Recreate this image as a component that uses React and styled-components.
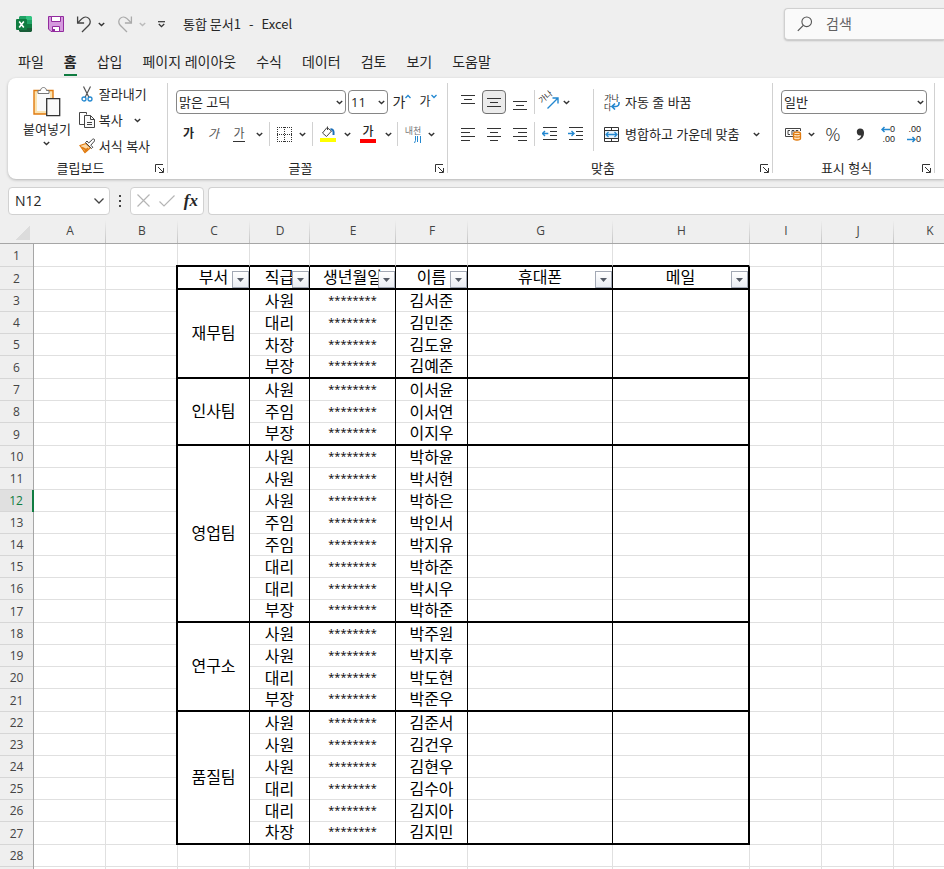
import React from "react";
import styled, { createGlobalStyle, css } from "styled-components";

const COLUMNS = [
  { name: "A", width: 72 },
  { name: "B", width: 72 },
  { name: "C", width: 72 },
  { name: "D", width: 60 },
  { name: "E", width: 86 },
  { name: "F", width: 72 },
  { name: "G", width: 145 },
  { name: "H", width: 137 },
  { name: "I", width: 72 },
  { name: "J", width: 72 },
  { name: "K", width: 72 },
];

const HEADINGS = ["부서", "직급", "생년월일", "이름", "휴대폰", "메일"];

const TEAMS = [
  {
    name: "재무팀",
    people: [
      ["사원", "김서준"],
      ["대리", "김민준"],
      ["차장", "김도윤"],
      ["부장", "김예준"],
    ],
  },
  {
    name: "인사팀",
    people: [
      ["사원", "이서윤"],
      ["주임", "이서연"],
      ["부장", "이지우"],
    ],
  },
  {
    name: "영업팀",
    people: [
      ["사원", "박하윤"],
      ["사원", "박서현"],
      ["사원", "박하은"],
      ["주임", "박인서"],
      ["주임", "박지유"],
      ["대리", "박하준"],
      ["대리", "박시우"],
      ["부장", "박하준"],
    ],
  },
  {
    name: "연구소",
    people: [
      ["사원", "박주원"],
      ["사원", "박지후"],
      ["대리", "박도현"],
      ["부장", "박준우"],
    ],
  },
  {
    name: "품질팀",
    people: [
      ["사원", "김준서"],
      ["사원", "김건우"],
      ["사원", "김현우"],
      ["대리", "김수아"],
      ["대리", "김지아"],
      ["차장", "김지민"],
    ],
  },
];

const TABS = ["파일", "홈", "삽입", "페이지 레이아웃", "수식", "데이터", "검토", "보기", "도움말"];

const ACTIVE_ROW = 12;

// one entry per sheet row, the people start at row 3
const people = [];
TEAMS.forEach((team) => {
  team.people.forEach(([rank, name], i) => {
    people.push({
      row: people.length + 3,
      team: i === 0 ? team : null,
      rank,
      name,
      last: i === team.people.length - 1,
    });
  });
});

const Chevron = ({ color = "#333" }) => (
  <svg width="7" height="5" viewBox="0 0 7 5" fill="none" aria-hidden="true">
    <path d="M.8 1l2.7 2.6L6.2 1" stroke={color} strokeWidth="1.4" />
  </svg>
);

const ExcelLogo = () => (
  <svg width="16" height="16" viewBox="0 0 16 16" aria-hidden="true">
    <path d="M4 0h6v4H3V1z" fill="#21a366" />
    <path d="M10 0h5l1 1v3h-6z" fill="#33c481" />
    <path d="M3 4h7v4H3z" fill="#107c41" />
    <path d="M10 4h6v4h-6z" fill="#21a366" />
    <path d="M3 8h7v4H3z" fill="#185c37" />
    <path d="M10 8h6v4h-6z" fill="#107c41" />
    <path d="M3 12h13v3l-1 1H4l-1-1z" fill="#185c37" />
    <rect y="3" width="11" height="11" rx="1" fill="#107c41" />
    <path d="M3.2 5.5l4.6 6M7.8 5.5l-4.6 6" stroke="#fff" strokeWidth="1.6" />
  </svg>
);

const SaveIcon = () => (
  <svg width="16" height="16" viewBox="0 0 16 16" fill="none" aria-hidden="true">
    <path d="M.5.5h15v15H3l-2.5-2.5z" fill="#d59ade" stroke="#922b9e" />
    <path d="M3.5.5h9v5h-9z" fill="#fff" stroke="#922b9e" />
    <path d="M4.5 15.5v-5h7v5z" fill="#fff" stroke="#922b9e" />
    <path d="M7 13v2.5H5V13z" fill="#922b9e" />
  </svg>
);

const UndoIcon = ({ color = "#444", flip }) => (
  <svg width="16" height="17" viewBox="0 0 16 17" fill="none" aria-hidden="true">
    <g transform={flip ? "matrix(-1 0 0 1 16 0)" : undefined} stroke={color} strokeWidth="1.3">
      <path d="M1.6.5v6.5h6.5" />
      <path d="M1.8 6.8L6 2.6c2-2 5-2 6.8-.2s2 4.8 0 6.8L6 16" />
    </g>
  </svg>
);

const QuickMenuIcon = () => (
  <svg width="7" height="7" viewBox="0 0 7 7" fill="none" aria-hidden="true">
    <path d="M0 .7h7" stroke="#333" strokeWidth="1.2" />
    <path d="M.8 3l2.7 2.6L6.2 3" stroke="#333" strokeWidth="1.3" />
  </svg>
);

const SearchIcon = () => (
  <svg width="16" height="16" viewBox="0 0 16 16" fill="none" stroke="#555" aria-hidden="true">
    <circle cx="9.7" cy="5.8" r="4.8" strokeWidth="1.1" />
    <path d="M6.3 9.3L.8 14.8" strokeWidth="1.2" />
  </svg>
);

const PasteIcon = () => (
  <svg width="28" height="31" viewBox="0 0 28 31" fill="none" aria-hidden="true">
    <path d="M1 4.5h19V28H1z" fill="#fbe3b0" stroke="#e07b10" strokeWidth="1.4" />
    <path d="M4 7h13v18H4z" fill="#fafafa" />
    <path d="M5 7.5V4.5h2.5c.3-4 5.7-4 6 0H16v3z" fill="#fff" stroke="#777" />
    <path d="M13.7 12.7h13v17h-13z" fill="#fafafa" stroke="#333" strokeWidth="1.3" />
  </svg>
);

const CutIcon = () => (
  <svg width="12" height="16" viewBox="0 0 12 16" fill="none" aria-hidden="true">
    <path d="M2.5.5l5.5 11M9.5.5L4 11.5" stroke="#555" strokeWidth="1.2" />
    <circle cx="3" cy="13" r="2" stroke="#2488d0" strokeWidth="1.3" />
    <circle cx="9" cy="13" r="2" stroke="#2488d0" strokeWidth="1.3" />
  </svg>
);

const CopyIcon = () => (
  <svg width="17" height="16" viewBox="0 0 17 16" fill="none" stroke="#444" aria-hidden="true">
    <path d="M5.5 12.5h-5V.5h7v2" />
    <path d="M5.5 3.5h6l4 4v8h-10z" fill="#fafafa" />
    <path d="M11.5 3.5v4h4M8 10.5h5M8 12.5h5" />
  </svg>
);

const BrushIcon = () => (
  <svg width="16" height="16" viewBox="0 0 16 16" fill="none" aria-hidden="true">
    <path d="M7 5.5L1 7.5l5 7 5.5-4.8z" fill="#fbd9a8" stroke="#e07b10" strokeWidth="1.2" />
    <path d="M3 9.5l5.5 3M5 14l4-4" stroke="#e07b10" strokeWidth="1.6" />
    <path d="M6.5 4.5l6 6 1.3-1.3-2-2L15.5 3c.8-1.2-.6-2.6-1.8-1.8L9.7 5 8 3z" fill="#fff" stroke="#444" />
  </svg>
);

const LauncherIcon = () => (
  <svg width="9" height="9" viewBox="0 0 9 9" fill="none" stroke="#333" aria-hidden="true">
    <path d="M.5 8V.5H8M3 3l5 5M8.5 4v4.5H4" />
  </svg>
);

const BordersIcon = () => (
  <svg width="15" height="15" viewBox="0 0 15 15" fill="none" stroke="#333" aria-hidden="true">
    <path d="M0 .5h15M0 14.5h15M.5 0v15M14.5 0v15M0 7.5h15M7.5 0v15" strokeDasharray="1 1" />
  </svg>
);

const FillIcon = () => (
  <svg width="16" height="16" viewBox="0 0 16 16" fill="none" aria-hidden="true">
    <path d="M7 1.5L2.5 7l4 3.5L11.5 5z" fill="#fff" stroke="#444" />
    <path d="M7.5 4V.5" stroke="#444" />
    <path d="M10.5 3.2c2.500-.3 3.5 1.5 3 5.8" stroke="#1c6fb8" strokeWidth="2" />
    <path d="M0 12h16v4H0z" fill="#ff0" />
  </svg>
);

const ALIGN = {
  top: "M0 .5h14M3 4.5h8M0 8.5h14",
  middle: "M0 3.5h14M3 7.5h8M0 11.5h14",
  bottom: "M0 6.5h14M3 10.5h8M0 14.5h14",
  left: "M0 1.5h14M0 5.5h9M0 9.5h14M0 13.5h9",
  center: "M0 1.5h14M3 5.5h8M0 9.5h14M3 13.5h8",
  right: "M0 1.5h14M5 5.5h9M0 9.5h14M5 13.5h9",
};

const AlignIcon = ({ kind }) => (
  <svg width="14" height="15" viewBox="0 0 14 15" stroke="#333" aria-hidden="true">
    <path d={ALIGN[kind]} />
  </svg>
);

const IndentIcon = ({ more }) => (
  <svg width="15" height="14" viewBox="0 0 15 14" fill="none" aria-hidden="true">
    <path d="M1 .5h14M8 4.5h7M8 8.5h7M1 12.5h14" stroke="#333" />
    <path
      d={more ? "M0 6.5h5.5M3.5 4L6 6.5 3.5 9" : "M.8 6.5h5.5M3 4L.5 6.5 3 9"}
      stroke="#2488d0"
      strokeWidth="1.4"
    />
  </svg>
);

const ArrowIcon = () => (
  <svg width="12" height="12" viewBox="0 0 12 12" fill="none" stroke="#2488d0" aria-hidden="true">
    <path d="M.5 11.5L11 1M5.5 1H11v5.5" strokeWidth="1.4" />
  </svg>
);

const WrapArrow = () => (
  <svg width="9" height="8" viewBox="0 0 9 8" fill="none" stroke="#2488d0" aria-hidden="true">
    <path d="M8 0c.3 3-1 4.5-3 4.5H1M4 1.5l-3 3 3 3" strokeWidth="1.6" />
  </svg>
);

const MergeIcon = () => (
  <svg width="15" height="15" viewBox="0 0 15 15" fill="none" aria-hidden="true">
    <path d="M.5.5h14v14H.5zM.5 3.5h14M.5 11.5h14M7.5.5v3M7.5 11.5v3" stroke="#333" />
    <path d="M1 4h13v7H1z" fill="#e8f3fb" />
    <path d="M2 7.5h11M4.5 5L2 7.5 4.5 10M10.5 5L13 7.5 10.5 10" stroke="#2488d0" strokeWidth="1.3" />
  </svg>
);

const MoneyIcon = () => (
  <svg width="17" height="14" viewBox="0 0 17 14" fill="none" aria-hidden="true">
    <path d="M8 9.5H.5v-8h15V4" stroke="#444" />
    <path d="M5 3.5H3v4h2M7 8V3.5h2V5M11 4.5v-1h2V4" stroke="#444" />
    <path d="M8.5 6.5c0-2 7-2 7 0v5c0 2-7 2-7 0z" fill="#fde3c0" stroke="#e07b10" strokeWidth="1.3" />
    <path d="M8.5 6.5c0 1.5 7 1.5 7 0M8.5 9c0 1.5 7 1.5 7 0" stroke="#e07b10" strokeWidth="1.2" />
  </svg>
);

const CommaIcon = () => (
  <svg width="9" height="13" viewBox="0 0 9 13" fill="#333" aria-hidden="true">
    <path d="M4 .5C6.6.5 8 2 8 4.7 8 9 5.5 11.5 1.5 12.5l-.3-.8C3.5 10.8 5 9.3 5.2 7.2 2.5 8 .8 6.3.8 4S2 .5 4 .5z" />
  </svg>
);

const ShortArrow = ({ right }) => (
  <svg width="9" height="7" viewBox="0 0 9 7" fill="none" stroke="#2488d0" aria-hidden="true">
    <path
      d={right ? "M0 3.5h8M5.5 1L8 3.5 5.5 6" : "M1 3.5h8M3.5 1L1 3.5 3.5 6"}
      strokeWidth="1.5"
    />
  </svg>
);

const PhoneticMarks = () => (
  <svg width="7" height="7" viewBox="0 0 7 7" fill="none" stroke="#2488d0" aria-hidden="true">
    <path d="M1.5 0v4.5L.5 7M3.5 0v6M6.5 0v7" />
  </svg>
);

const CancelIcon = () => (
  <svg width="13" height="13" viewBox="0 0 13 13" stroke="#b5b5b5" aria-hidden="true">
    <path d="M.5.5l12 12M12.5.5l-12 12" strokeWidth="1.2" />
  </svg>
);

const AcceptIcon = () => (
  <svg width="16" height="12" viewBox="0 0 16 12" fill="none" stroke="#b5b5b5" aria-hidden="true">
    <path d="M.5 6.5L5 11 15.5.5" strokeWidth="1.2" />
  </svg>
);

const FilterArrow = () => (
  <svg width="7" height="4" viewBox="0 0 7 4" fill="#555b66" aria-hidden="true">
    <path d="M0 0h7L3.5 4z" />
  </svg>
);

const Launcher = ({ label }) => (
  <LauncherButton aria-label={label}>
    <LauncherIcon />
  </LauncherButton>
);

const ClipboardGroup = () => (
  <Group $width={160}>
    <ClipboardBody>
      <PasteButton>
        <PasteIcon />
        <span>붙여넣기</span>
        <Chevron />
      </PasteButton>
      <ClipboardActions>
        <TextButton>
          <IconSlot>
            <CutIcon />
          </IconSlot>
          잘라내기
        </TextButton>
        <TextButton>
          <IconSlot>
            <CopyIcon />
          </IconSlot>
          복사
          <MenuMark>
            <Chevron />
          </MenuMark>
        </TextButton>
        <TextButton>
          <IconSlot>
            <BrushIcon />
          </IconSlot>
          서식 복사
        </TextButton>
      </ClipboardActions>
    </ClipboardBody>
    <GroupFooter>
      클립보드
      <Launcher label="클립보드 설정" />
    </GroupFooter>
  </Group>
);

const FontGroup = () => (
  <Group $width={280}>
    <GroupBody>
      <Tools>
        <SelectBox $width={170}>
          <select aria-label="글꼴" defaultValue="맑은 고딕">
            <option>맑은 고딕</option>
          </select>
          <Chevron />
        </SelectBox>
        <SelectBox $width={40}>
          <select aria-label="글꼴 크기" defaultValue="11">
            <option>11</option>
          </select>
          <Chevron />
        </SelectBox>
        <Tool $width={24} $size={14} aria-label="글꼴 크기 크게">
          가
          <Caret>
            <svg width="6" height="5" viewBox="0 0 6 5" fill="none" stroke="#2488d0" aria-hidden="true">
              <path d="M.5 4L3 1.5 5.5 4" strokeWidth="1.3" />
            </svg>
          </Caret>
        </Tool>
        <Tool $width={24} $size={12} aria-label="글꼴 크기 작게">
          가
          <Caret>
            <svg width="6" height="5" viewBox="0 0 6 5" fill="none" stroke="#2488d0" aria-hidden="true">
              <path d="M.5 1L3 3.5 5.5 1" strokeWidth="1.3" />
            </svg>
          </Caret>
        </Tool>
      </Tools>
      <Tools $gap={0}>
        <Tool $width={25} $bold>
          가
        </Tool>
        <Tool $width={25} $italic $muted>
          가
        </Tool>
        <Tool $width={26} $muted>
          <Underlined>가</Underlined>
        </Tool>
        <Tool $width={14} aria-label="밑줄 옵션">
          <Chevron />
        </Tool>
        <Separator $space={3} />
        <Tool $width={22} aria-label="테두리">
          <BordersIcon />
        </Tool>
        <Tool $width={14} aria-label="테두리 옵션">
          <Chevron />
        </Tool>
        <Separator $space={3} />
        <Tool $width={24} aria-label="채우기 색">
          <FillIcon />
        </Tool>
        <Tool $width={14} aria-label="채우기 옵션">
          <Chevron />
        </Tool>
        <Tool $width={28}>
          <FontColor>가</FontColor>
        </Tool>
        <Tool $width={12} aria-label="글꼴 색 옵션">
          <Chevron />
        </Tool>
        <Separator $space={3} />
        <Tool $width={24}>
          <Phonetic>
            내천
            <PhoneticMarks />
          </Phonetic>
        </Tool>
        <Tool $width={12} aria-label="윗주 옵션">
          <Chevron />
        </Tool>
      </Tools>
    </GroupBody>
    <GroupFooter>
      글꼴
      <Launcher label="글꼴 설정" />
    </GroupFooter>
  </Group>
);

const AlignGroup = () => (
  <Group $width={325}>
    <AlignBody>
      <AlignTools>
        <Tools>
          <Tool $width={24} aria-label="위쪽 맞춤">
            <AlignIcon kind="top" />
          </Tool>
          <Tool $width={24} $pressed aria-label="세로 가운데 맞춤">
            <AlignIcon kind="middle" />
          </Tool>
          <Tool $width={24} aria-label="아래쪽 맞춤">
            <AlignIcon kind="bottom" />
          </Tool>
          <Separator />
          <Tool $width={24} aria-label="방향">
            <Orientation>
              <span>가나</span>
              <ArrowIcon />
            </Orientation>
          </Tool>
          <Tool $width={6} aria-label="방향 옵션">
            <Chevron />
          </Tool>
        </Tools>
        <Tools>
          <Tool $width={24} aria-label="왼쪽 맞춤">
            <AlignIcon kind="left" />
          </Tool>
          <Tool $width={24} aria-label="가운데 맞춤">
            <AlignIcon kind="center" />
          </Tool>
          <Tool $width={24} aria-label="오른쪽 맞춤">
            <AlignIcon kind="right" />
          </Tool>
          <Separator />
          <Tool $width={24} aria-label="내어쓰기">
            <IndentIcon />
          </Tool>
          <Tool $width={24} aria-label="들여쓰기">
            <IndentIcon more />
          </Tool>
        </Tools>
      </AlignTools>
      <TallSeparator />
      <WideTools>
        <WideButton>
          <WrapGlyph>
            가나
            <span>
              다<WrapArrow />
            </span>
          </WrapGlyph>
          자동 줄 바꿈
        </WideButton>
        <WideButton>
          <MergeIcon />
          병합하고 가운데 맞춤
          <MenuMark>
            <Chevron />
          </MenuMark>
        </WideButton>
      </WideTools>
    </AlignBody>
    <GroupFooter>
      맞춤
      <Launcher label="맞춤 설정" />
    </GroupFooter>
  </Group>
);

const NumberGroup = () => (
  <Group $width={162}>
    <GroupBody>
      <Tools>
        <SelectBox $width={146}>
          <select aria-label="표시 형식" defaultValue="일반">
            <option>일반</option>
          </select>
          <Chevron />
        </SelectBox>
      </Tools>
      <Tools>
        <Tool $width={24} aria-label="회계 표시 형식">
          <MoneyIcon />
        </Tool>
        <Tool $width={8} aria-label="회계 옵션">
          <Chevron />
        </Tool>
        <Tool $width={32} $size={19} $light>
          %
        </Tool>
        <Tool $width={18} aria-label="쉼표 스타일">
          <CommaIcon />
        </Tool>
        <Separator $space={2} />
        <Tool $width={22} aria-label="자릿수 늘림">
          <Decimals>
            <span>
              <ShortArrow />0
            </span>
            <span>.00</span>
          </Decimals>
        </Tool>
        <Tool $width={26} aria-label="자릿수 줄임">
          <Decimals>
            <span>.00</span>
            <span>
              <ShortArrow right />0
            </span>
          </Decimals>
        </Tool>
      </Tools>
    </GroupBody>
    <GroupFooter>
      표시 형식
      <Launcher label="표시 형식 설정" />
    </GroupFooter>
  </Group>
);

const Sheet = () => (
  <SheetArea>
    <Table>
      <colgroup>
        <col width="34" />
        {COLUMNS.map((column) => (
          <col key={column.name} width={column.width} />
        ))}
      </colgroup>
      <thead>
        <tr>
          <Corner aria-label="모두 선택" />
          {COLUMNS.map((column) => (
            <ColumnHead key={column.name} scope="col">
              {column.name}
            </ColumnHead>
          ))}
        </tr>
      </thead>
      <tbody>
        <Row $tall>
          <RowHead scope="row">1</RowHead>
          {COLUMNS.map((column, i) => (
            <Cell key={column.name} $thickBottom={i > 1 && i < 8} />
          ))}
        </Row>
        <Row $tall>
          <RowHead scope="row">2</RowHead>
          <Cell />
          <Cell />
          {HEADINGS.map((heading, i) => (
            <Cell
              key={heading}
              $ink
              $thickBottom
              $leftEdge={i === 0}
              $thickRight={i === HEADINGS.length - 1}
            >
              {heading}
              <FilterButton aria-label={`${heading} 필터`}>
                <FilterArrow />
              </FilterButton>
            </Cell>
          ))}
          <Cell />
          <Cell />
          <Cell />
        </Row>
        {people.map((person) => (
          <Row key={person.row} $tall={person.last}>
            <RowHead scope="row" $active={person.row === ACTIVE_ROW}>
              {person.row}
            </RowHead>
            <Cell />
            <Cell />
            {person.team && (
              <Cell rowSpan={person.team.people.length} $ink $leftEdge $thickBottom>
                {person.team.name}
              </Cell>
            )}
            <Cell $ink $thickBottom={person.last}>
              {person.rank}
            </Cell>
            <Cell $ink $thickBottom={person.last}>
              <Masked>********</Masked>
            </Cell>
            <Cell $ink $thickBottom={person.last}>
              {person.name}
            </Cell>
            <Cell $ink $thickBottom={person.last} />
            <Cell $ink $thickRight $thickBottom={person.last} />
            <Cell />
            <Cell />
            <Cell />
          </Row>
        ))}
        <Row>
          <RowHead scope="row">28</RowHead>
          {COLUMNS.map((column) => (
            <Cell key={column.name} />
          ))}
        </Row>
        <Row>
          <RowHead />
          {COLUMNS.map((column) => (
            <Cell key={column.name} />
          ))}
        </Row>
      </tbody>
    </Table>
  </SheetArea>
);

const App = () => (
  <Window>
    <GlobalStyle />
    <TitleBar>
      <ExcelLogo />
      <QuickAccess>
        <QuickButton aria-label="저장" $width={16}>
          <SaveIcon />
        </QuickButton>
        <QuickButton aria-label="실행 취소" $width={29}>
          <UndoIcon />
          <Chevron />
        </QuickButton>
        <QuickButton aria-label="다시 실행" $width={29}>
          <UndoIcon flip color="#aaa" />
          <Chevron color="#bbb" />
        </QuickButton>
        <QuickButton aria-label="빠른 실행 도구 모음" $width={8}>
          <QuickMenuIcon />
        </QuickButton>
      </QuickAccess>
      <Title>
        <span>통합 문서1</span>
        <span>-</span>
        <span>Excel</span>
      </Title>
      <Search>
        <SearchIcon />
        <input type="search" placeholder="검색" aria-label="검색" />
      </Search>
    </TitleBar>
    <TabBar>
      {TABS.map((tab) => (
        <Tab key={tab} $active={tab === "홈"}>
          {tab}
        </Tab>
      ))}
    </TabBar>
    <Ribbon>
      <ClipboardGroup />
      <FontGroup />
      <AlignGroup />
      <NumberGroup />
    </Ribbon>
    <FormulaBar>
      <NameBox>
        <input defaultValue="N12" aria-label="이름 상자" />
        <svg width="10" height="6" viewBox="0 0 10 6" fill="none" stroke="#444" aria-hidden="true">
          <path d="M.5.5L5 5 9.5.5" strokeWidth="1.3" />
        </svg>
      </NameBox>
      <Dots>
        <i />
        <i />
        <i />
      </Dots>
      <FormulaButtons>
        <button aria-label="취소">
          <CancelIcon />
        </button>
        <button aria-label="입력">
          <AcceptIcon />
        </button>
        <FxButton>fx</FxButton>
      </FormulaButtons>
      <FormulaInput aria-label="수식 입력줄" />
    </FormulaBar>
    <Sheet />
  </Window>
);

export default App;

const GlobalStyle = createGlobalStyle`
  * {
    box-sizing: border-box;
  }

  body {
    margin: 0;
    overflow: hidden;
    background: #efefef;
    color: #262626;
    font: 13px/18px "Open Sans", "Noto Sans CJK KR", sans-serif;
  }

  button, input, select {
    margin: 0;
    padding: 0;
    border: 0;
    background: none;
    color: inherit;
    font: inherit;
    outline: 0;
  }

  svg {
    display: block;
    flex: none;
  }
`;

const Window = styled.div`
  display: flex;
  flex-direction: column;
  height: 100vh;
`;

const TitleBar = styled.header`
  display: flex;
  align-items: center;
  height: 48px;
  padding-left: 16px;
`;

const QuickAccess = styled.div`
  display: flex;
  align-items: center;
  gap: 12px;
  margin-left: 16px;
`;

const QuickButton = styled.button`
  display: flex;
  align-items: center;
  justify-content: space-between;
  width: ${(props) => props.$width}px;
  height: 24px;
`;

const Title = styled.div`
  display: flex;
  gap: 8px;
  margin-left: 17px;
  font-family: "Noto Sans CJK KR", sans-serif;
  white-space: nowrap;
`;

const Search = styled.label`
  display: flex;
  align-items: center;
  flex: none;
  gap: 13px;
  width: 160px;
  height: 32px;
  margin-left: auto;
  padding-left: 12px;
  border: 1px solid #d0d0d0;
  border-right: 0;
  border-radius: 4px 0 0 4px;
  background: #fafafa;
  box-shadow: 0 1px 2px rgba(0, 0, 0, 0.2);
  font-size: 14px;

  input {
    width: 100%;
    min-width: 0;
  }

  input::placeholder {
    color: #616161;
    opacity: 1;
  }
`;

const TabBar = styled.nav`
  display: flex;
  align-items: flex-start;
  gap: 20px;
  height: 30px;
  padding: 4px 18px 0;
`;

const Tab = styled.button`
  height: 24px;
  padding-bottom: 2px;
  border-bottom: 2px solid ${(props) => (props.$active ? "#107c41" : "transparent")};
  font-size: 14px;
  line-height: 20px;
  font-weight: ${(props) => (props.$active ? 700 : 400)};
  white-space: nowrap;
`;

const Ribbon = styled.section`
  display: flex;
  flex: none;
  height: 101px;
  margin-left: 8px;
  padding-top: 5px;
  border-radius: 8px 0 0 8px;
  background: #fff;
  box-shadow: 0 1px 3px rgba(0, 0, 0, 0.25);
`;

const Group = styled.div`
  display: flex;
  flex-direction: column;
  flex: none;
  width: ${(props) => props.$width}px;
  height: 90px;
  border-right: 1px solid #d1d1d1;
`;

const GroupBody = styled.div`
  display: flex;
  flex-direction: column;
  gap: 8px;
  flex: 1;
  padding: 7px 8px 0;
`;

const ClipboardBody = styled.div`
  display: flex;
  flex: 1;
  padding-left: 15px;
`;

const AlignBody = styled.div`
  display: flex;
  flex: 1;
`;

const AlignTools = styled(GroupBody)`
  flex: none;
  padding: 7px 6px 0 8px;
`;

const WideTools = styled(GroupBody)`
  padding: 7px 0 0 10px;
`;

const PasteButton = styled.button`
  display: flex;
  flex-direction: column;
  align-items: center;
  gap: 3px;
  height: 66px;
  padding-top: 3px;
  white-space: nowrap;
`;

const ClipboardActions = styled.div`
  display: flex;
  flex-direction: column;
  margin-left: 8px;
`;

const TextButton = styled.button`
  display: flex;
  align-items: center;
  gap: 3px;
  height: 26px;
  padding-bottom: 4px;
  white-space: nowrap;
`;

const IconSlot = styled.span`
  display: flex;
  justify-content: center;
  width: 17px;
`;

const MenuMark = styled.span`
  margin-left: 8px;
`;

const GroupFooter = styled.div`
  display: flex;
  align-items: center;
  justify-content: center;
  flex: none;
  position: relative;
  height: 10px;
  padding-right: 14px;
`;

const LauncherButton = styled.button`
  position: absolute;
  right: 3px;
  bottom: 0;
`;

const Tools = styled.div`
  display: flex;
  align-items: center;
  gap: ${(props) => props.$gap ?? 2}px;
  height: 24px;
`;

const Tool = styled.button`
  display: flex;
  align-items: center;
  justify-content: center;
  flex: none;
  width: ${(props) => props.$width}px;
  height: 24px;
  border-radius: 4px;
  color: ${(props) => (props.$muted ? "#555" : "inherit")};
  font-size: ${(props) => props.$size || 12}px;
  font-weight: ${(props) => (props.$bold ? 700 : props.$light ? 300 : 400)};
  font-style: ${(props) => (props.$italic ? "italic" : "normal")};

  ${(props) =>
    props.$pressed &&
    css`
      border: 1px solid #707070;
      background: #ebebeb;
    `}
`;

const Caret = styled.span`
  align-self: flex-start;
  padding-top: 4px;
`;

const Underlined = styled.span`
  border-bottom: 1px solid #333;
  line-height: 15px;
`;

const FontColor = styled.span`
  width: 16px;
  border-bottom: 4px solid #f00;
  font-weight: 500;
  line-height: 14px;
`;

const Phonetic = styled.span`
  display: flex;
  flex-direction: column;
  color: #777;
  font-size: 9px;
  line-height: 9px;
  white-space: nowrap;

  svg {
    align-self: flex-end;
    margin-top: 1px;
  }
`;

const Separator = styled.span`
  width: 1px;
  height: 24px;
  margin: 0 ${(props) => props.$space || 0}px;
  background: #d1d1d1;
`;

const TallSeparator = styled(Separator)`
  height: 62px;
  margin-top: 6px;
`;

const SelectBox = styled.label`
  display: flex;
  align-items: center;
  flex: none;
  width: ${(props) => props.$width}px;
  height: 24px;
  padding: 0 2px;
  border: 1px solid #868686;
  border-radius: 4px;

  select {
    flex: 1;
    min-width: 0;
    appearance: none;
  }
`;

const Orientation = styled.span`
  display: flex;
  align-items: flex-end;
  font-size: 8px;
  line-height: 8px;

  span {
    width: 8px;
    margin-bottom: 6px;
    white-space: nowrap;
    transform: rotate(-40deg);
  }
`;

const WideButton = styled.button`
  display: flex;
  align-items: center;
  gap: 6px;
  height: 24px;
  white-space: nowrap;
`;

const WrapGlyph = styled.span`
  display: flex;
  flex-direction: column;
  width: 15px;
  font-size: 8px;
  line-height: 9px;

  span {
    display: flex;
  }
`;

const Decimals = styled.span`
  display: flex;
  flex-direction: column;
  align-items: flex-end;
  font-family: "Liberation Sans", sans-serif;
  font-size: 9px;
  line-height: 10px;

  span {
    display: flex;
    align-items: center;
  }
`;

const FormulaBar = styled.div`
  display: flex;
  align-items: center;
  flex: none;
  height: 41px;
  padding: 2px 0 0 8px;
`;

const NameBox = styled.label`
  display: flex;
  align-items: center;
  width: 102px;
  height: 28px;
  padding: 0 5px 0 6px;
  border: 1px solid #d1d1d1;
  border-radius: 4px;
  background: #fff;
  font-size: 14px;

  input {
    flex: 1;
    min-width: 0;
  }
`;

const Dots = styled.span`
  display: flex;
  flex-direction: column;
  align-items: center;
  gap: 3px;
  width: 20px;

  i {
    width: 2px;
    height: 2px;
    background: #444;
  }
`;

const FormulaButtons = styled.div`
  display: flex;
  align-items: center;
  justify-content: space-between;
  width: 74px;
  height: 28px;
  padding: 0 5px 0 6px;
  border: 1px solid #d1d1d1;
  border-radius: 4px;
  background: #fff;
`;

const FxButton = styled.button`
  font-family: "Liberation Serif", serif;
  font-size: 17px;
  font-style: italic;
  font-weight: 700;
`;

const FormulaInput = styled.input`
  flex: 1;
  height: 28px;
  margin-left: 4px;
  border: 1px solid #d1d1d1;
  border-right: 0;
  border-radius: 4px 0 0 4px;
  background: #fff;
`;

const SheetArea = styled.main`
  flex: 1;
  min-height: 0;
  overflow: hidden;
  background: #fff;
`;

const Table = styled.table`
  width: 966px;
  table-layout: fixed;
  border-spacing: 0;
`;

const ColumnHead = styled.th`
  height: 24px;
  padding: 0 0 2px;
  border-bottom: 1px solid #a6a6a6;
  background: linear-gradient(#efefef, #c4c4c4) right / 1px 100% no-repeat #efefef;
  color: #444;
  font-size: 12px;
  font-weight: 400;
`;

const Corner = styled.th`
  padding: 0;
  border-bottom: 1px solid #a6a6a6;
  background: linear-gradient(135deg, transparent 50%, #dcdcdc 50%) 16px 6px / 14px 14px no-repeat #efefef;
`;

const Row = styled.tr`
  height: ${(props) => (props.$tall ? 23 : 22)}px;
`;

const RowHead = styled.th`
  padding: 0;
  border-right: 1px solid #a6a6a6;
  background: #efefef;
  box-shadow: inset 0 -1px #d6d6d6;
  color: #444;
  font-size: 12px;
  font-weight: 400;

  ${(props) =>
    props.$active &&
    css`
      border-right: 2px solid #107c41;
      background: #e0e0e0;
      color: #107c41;
    `}
`;

// light grid lines are inset shadows so that the black borders run through unbroken
const Cell = styled.td`
  position: relative;
  z-index: ${(props) => (props.$leftEdge ? 1 : 0)};
  padding: 0 0 3px;
  border-right: ${(props) => (props.$thickRight ? 2 : 1)}px solid
    ${(props) => (props.$ink ? "#000" : "#e0e0e0")};
  border-bottom: ${(props) => (props.$thickBottom ? "2px solid #000" : "0")};
  box-shadow: ${(props) => {
    if (props.$leftEdge) return "-2px 0 #000, -2px -2px #000";
    return props.$thickBottom ? "none" : "inset 0 -1px #e0e0e0";
  }};
  color: #000;
  font-family: "Noto Sans CJK KR", sans-serif;
  font-size: 16px;
  line-height: 18px;
  text-align: center;
  white-space: nowrap;
`;

const Masked = styled.span`
  display: block;
  font-family: "Open Sans", sans-serif;
  font-size: 11px;
`;

const FilterButton = styled.button`
  display: flex;
  align-items: center;
  justify-content: center;
  position: absolute;
  right: 0;
  bottom: 0;
  width: 17px;
  height: 17px;
  border: 1px solid #a3a9b5;
  background: linear-gradient(#fff, #e9ecf2);
`;
